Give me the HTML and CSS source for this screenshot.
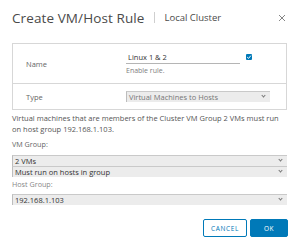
FILE: index.html
```html
<!DOCTYPE html>
<html>
<head>
<meta charset="utf-8">
<link rel="stylesheet" href="styles.css">
</head>
<body>
<div class="dialog">
  <div class="header">
    <span class="title">Create VM/Host Rule</span>
    <span class="sep"></span>
    <span class="subtitle">Local Cluster</span>
    <span class="close">
      <svg width="8" height="8" viewBox="0 0 8 8"><path d="M1 1 L7 7 M7 1 L1 7" stroke="#777" stroke-width="0.9" fill="none"/></svg>
    </span>
  </div>
  <div class="box">
    <div class="row row-name">
      <div class="label">Name</div>
      <div class="field">
        <div class="name-line">
          <div class="input">Linux 1 &amp; 2</div>
          <span class="check">
            <svg width="6" height="6" viewBox="0 0 6 6"><path d="M1.2 3.1 L2.5 4.4 L4.9 1.6" stroke="#fff" stroke-width="1" fill="none"/></svg>
          </span>
        </div>
        <div class="hint">Enable rule.</div>
      </div>
    </div>
    <div class="row row-type">
      <div class="label">Type</div>
      <div class="field">
        <div class="select small">Virtual Machines to Hosts<span class="chev"></span></div>
      </div>
    </div>
  </div>
  <p class="desc">Virtual machines that are members of the Cluster VM Group 2 VMs must run on host group 192.168.1.103.</p>
  <div class="flabel">VM Group:</div>
  <div class="select">2 VMs<span class="chev"></span></div>
  <div class="select">Must run on hosts in group<span class="chev"></span></div>
  <div class="flabel host">Host Group:</div>
  <div class="select">192.168.1.103<span class="chev"></span></div>
  <div class="actions">
    <button class="btn btn-outline">CANCEL</button>
    <button class="btn btn-primary">OK</button>
  </div>
</div>
</body>
</html>
```
FILE: styles.css
```css
* { box-sizing: border-box; }
html, body { margin: 0; padding: 0; background: #fff; }
body {
  font-family: "Open Sans", "Liberation Sans", sans-serif;
  color: #565656;
  width: 300px;
  height: 250px;
  overflow: hidden;
}
.dialog { padding: 0 13px 0 12px; }
.header {
  display: flex;
  align-items: center;
  height: 34px;
  padding-top: 1px;
}
.title { font-size: 13.5px; color: #4a4a4a; letter-spacing: 0.1px; }
.sep { width: 1px; height: 11px; background: #cfcfcf; margin: 0 9px 0 10px; }
.subtitle { font-size: 9.5px; color: #4a4a4a; }
.close { margin-left: auto; margin-right: 1px; display: flex; }
.box {
  margin-top: 9px;
  border: 1px solid #d7d7d7;
}
.row { display: flex; }
.row-name { height: 40px; border-bottom: 1px solid #d7d7d7; align-items: center; }
.row-type { height: 25px; align-items: center; }
.label { width: 113px; padding-left: 13px; font-size: 7.5px; color: #666; }
.field { flex: 1; }
.name-line { display: flex; align-items: center; }
.input {
  width: 114px;
  font-size: 7.5px;
  color: #333;
  padding: 0 0 1px 2px;
  border-bottom: 1px solid #b5b5b5;
  line-height: 10px;
}
.check {
  width: 6px; height: 6px;
  background: #0079b8;
  border-radius: 1px;
  margin-left: 6px;
  margin-top: -3px;
  display: flex;
}
.hint { font-size: 7px; color: #808080; margin-top: 2px; }
.select {
  position: relative;
  height: 11px;
  background: #ececec;
  border-top: 1px solid #c9c9c9;
  border-left: 1px solid #bdbdbd;
  font-size: 7.5px;
  line-height: 10px;
  color: #333;
  padding-left: 2px;
}
.select.small { width: 144px; color: #777; }
.chev {
  position: absolute;
  right: 5px;
  top: 2px;
  width: 3px; height: 3px;
  border-right: 1px solid #777;
  border-bottom: 1px solid #777;
  transform: rotate(45deg);
}
.desc {
  margin: 3px 0 0 0;
  font-size: 7.5px;
  line-height: 11px;
  color: #555;
}
.flabel { font-size: 7.2px; line-height: 11px; margin: 4px 0 5px; color: #666; }
.flabel.host { margin: 2px 0 4px; color: #888; }
.actions { display: flex; justify-content: flex-end; gap: 3px; margin-top: 14px; margin-right: -1px; }
.btn {
  height: 18px;
  font-family: inherit;
  font-size: 6.5px;
  letter-spacing: 0.6px;
  padding: 0;
  border-radius: 2px;
}
.btn-outline { width: 44px; background: #fff; border: 1px solid #0079b8; color: #0079b8; }
.btn-primary { width: 38px; background: #0079b8; border: 1px solid #0079b8; color: #fff; }
```
